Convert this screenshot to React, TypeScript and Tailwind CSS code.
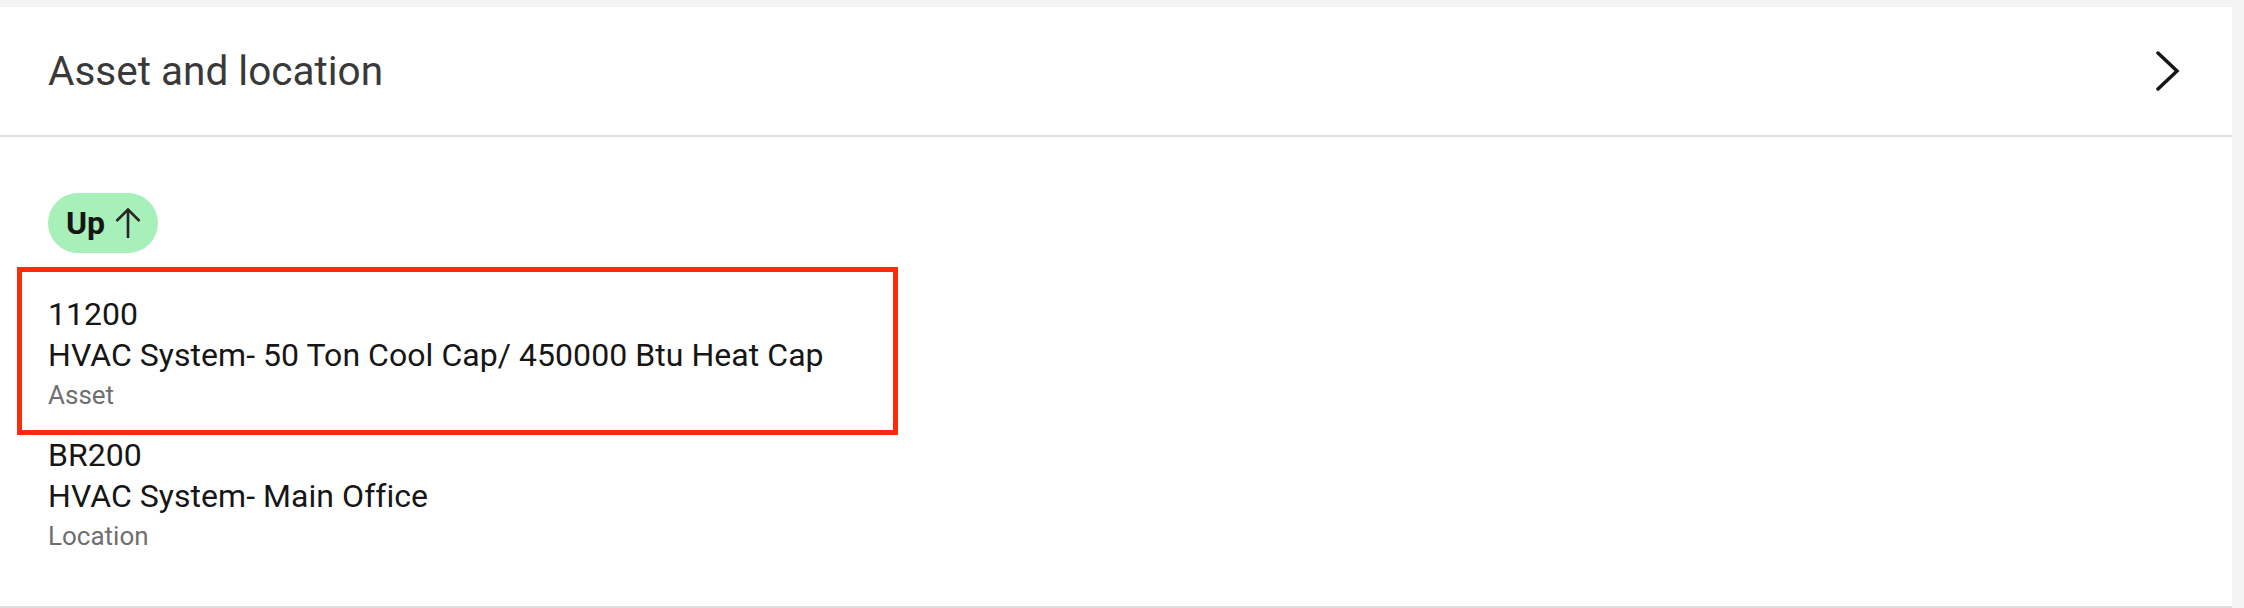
import React from "react";

const ChevronRight = () => (
  <svg width="26" height="40" viewBox="0 0 26 40" fill="none">
    <path
      d="M3 2 L22 20 L3 38"
      stroke="#161616"
      strokeWidth="3.5"
      strokeLinecap="round"
      strokeLinejoin="miter"
    />
  </svg>
);

const ArrowUp = () => (
  <svg width="26" height="32" viewBox="0 0 26 32" fill="none">
    <path d="M13 31 V2.5" stroke="#262626" strokeWidth="2.6" />
    <path d="M1.5 14 L13 2.5 L24.5 14" stroke="#262626" strokeWidth="2.6" />
  </svg>
);

type Entry = {
  id: string;
  description: string;
  kind: string;
};

const asset: Entry = {
  id: "11200",
  description: "HVAC System- 50 Ton Cool Cap/ 450000 Btu Heat Cap",
  kind: "Asset",
};

const location: Entry = {
  id: "BR200",
  description: "HVAC System- Main Office",
  kind: "Location",
};

const EntryLines = ({ entry }: { entry: Entry }) => (
  <>
    <div className="text-[32px] leading-[41px] text-[#161616]">{entry.id}</div>
    <div className="text-[32px] leading-[41px] tracking-[0.05px] text-[#161616]">
      {entry.description}
    </div>
    <div className="text-[26px] leading-[38px] text-[#6f6f6f]">{entry.kind}</div>
  </>
);

export default function App() {
  return (
    <div
      className="w-[2244px] h-[608px] bg-[#f4f4f4] pt-[7px] pr-[12px] overflow-hidden"
      style={{ fontFamily: "Roboto, 'Liberation Sans', sans-serif" }}
    >
      <div className="bg-white h-[601px] border-b-2 border-[#e0e0e0]">
        {/* Header */}
        <div className="h-[130px] flex items-center justify-between pl-[48px] pr-[51px] border-b-2 border-[#e0e0e0]">
          <h2 className="text-[40.5px] leading-[48px] font-normal text-[#393939]">
            Asset and location
          </h2>
          <ChevronRight />
        </div>

        {/* Body */}
        <div className="pl-[48px] pt-[56px]">
          <span className="inline-flex items-center gap-[10px] h-[60px] pl-[18px] pr-[17px] rounded-full bg-[#a7f0ba]">
            <span className="text-[32px] font-bold text-[#161616]">Up</span>
            <ArrowUp />
          </span>

          <div className="mt-[14px] ml-[-31px] w-[881px] border-[5px] border-[#ff2a0a] pl-[26px] pt-[22px] pb-[16px]">
            <EntryLines entry={asset} />
          </div>

          <div>
            <EntryLines entry={location} />
          </div>
        </div>
      </div>
    </div>
  );
}
